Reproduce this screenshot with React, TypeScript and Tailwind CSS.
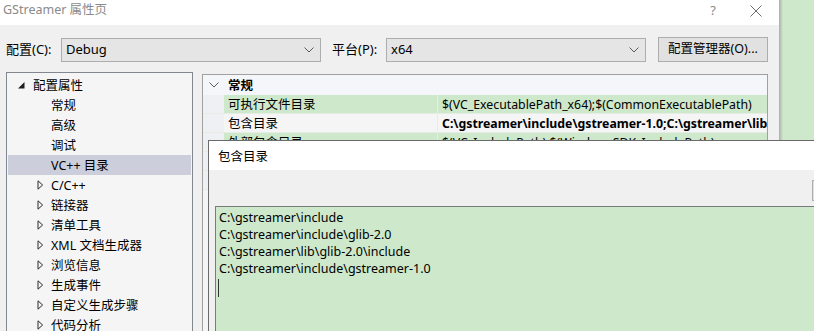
import React from "react";

const FONT = { fontFamily: '"Noto Sans", "Noto Sans CJK SC", sans-serif' };

function Chevron({ className = "" }: { className?: string }) {
  return (
    <svg width="10" height="6" viewBox="0 0 10 6" className={className}>
      <path d="M0.5 0.5 L5 5 L9.5 0.5" fill="none" stroke="#5a5a5a" strokeWidth="1" />
    </svg>
  );
}

function Combo({ text, width }: { text: string; width: string }) {
  return (
    <div className={`${width} h-[24px] border border-[#adadad] bg-[#e5e5e5] flex items-center pl-[4px] pr-[6px]`}>
      <span className="flex-1 text-[13px] text-black">{text}</span>
      <Chevron />
    </div>
  );
}

function Collapsed() {
  return (
    <svg width="7" height="10" viewBox="0 0 7 10" className="shrink-0">
      <path d="M1 0.8 L5.6 5 L1 9.2 Z" fill="none" stroke="#2b2b2b" strokeWidth="1" />
    </svg>
  );
}

function Expanded() {
  return (
    <svg width="7" height="7" viewBox="0 0 7 7" className="shrink-0">
      <path d="M6.5 0 L6.5 6.5 L0 6.5 Z" fill="#1e1e1e" />
    </svg>
  );
}

const treeItems: { label: string; kind: "leaf" | "collapsed"; selected?: boolean }[] = [
  { label: "常规", kind: "leaf" },
  { label: "高级", kind: "leaf" },
  { label: "调试", kind: "leaf" },
  { label: "VC++ 目录", kind: "leaf", selected: true },
  { label: "C/C++", kind: "collapsed" },
  { label: "链接器", kind: "collapsed" },
  { label: "清单工具", kind: "collapsed" },
  { label: "XML 文档生成器", kind: "collapsed" },
  { label: "浏览信息", kind: "collapsed" },
  { label: "生成事件", kind: "collapsed" },
  { label: "自定义生成步骤", kind: "collapsed" },
  { label: "代码分析", kind: "collapsed" },
];

const rows: { name: string; value: string; green: boolean; bold?: boolean }[] = [
  { name: "可执行文件目录", value: "$(VC_ExecutablePath_x64);$(CommonExecutablePath)", green: true },
  { name: "包含目录", value: "C:\\gstreamer\\include\\gstreamer-1.0;C:\\gstreamer\\lib\\glib-2.0\\include;C:\\gstreamer", green: false, bold: true },
  { name: "外部包含目录", value: "$(VC_IncludePath);$(WindowsSDK_IncludePath);", green: true },
  { name: "引用目录", value: "$(VC_ReferencesPath_x64);", green: false },
  { name: "库目录", value: "$(VC_LibraryPath_x64);$(WindowsSDK_LibraryPath_x64)", green: true },
];

const paths = [
  "C:\\gstreamer\\include",
  "C:\\gstreamer\\include\\glib-2.0",
  "C:\\gstreamer\\lib\\glib-2.0\\include",
  "C:\\gstreamer\\include\\gstreamer-1.0",
];

export default function App() {
  return (
    <div className="w-[814px] h-[331px] overflow-hidden relative flex bg-[#cee8cb]" style={FONT}>
      {/* Main property window */}
      <div className="w-[779px] h-full flex flex-col bg-[#f0f0f0] shrink-0">
        {/* Title bar */}
        <div className="h-[25px] bg-white flex items-center pl-[3px] shrink-0">
          <span className="text-[12.5px] text-[#8a8a8a] flex-1 -mt-[4px]">GStreamer 属性页</span>
          <span className="text-[13px] text-[#8a8a8a] w-[14px] text-center -mt-[4px]">?</span>
          <svg width="12" height="12" viewBox="0 0 12 12" className="ml-[30px] mr-[17px] -mt-[4px]">
            <path d="M0.5 0.5 L11.5 11.5 M11.5 0.5 L0.5 11.5" stroke="#6a6a6a" strokeWidth="1" />
          </svg>
        </div>

        {/* Config row */}
        <div className="flex items-center mt-[12px] h-[26px] shrink-0">
          <span className="text-[13px] text-black ml-[6px] w-[55px]">配置(C):</span>
          <Combo text="Debug" width="w-[260px]" />
          <span className="text-[13px] text-black ml-[11px] w-[54px]">平台(P):</span>
          <Combo text="x64" width="w-[260px]" />
          <div className="ml-[12px] w-[110px] h-[25px] border border-[#adadad] bg-[#e1e1e1] flex items-center justify-center text-[12.5px] text-black -mt-[2px]">
            配置管理器(O)...
          </div>
        </div>

        {/* Main panes */}
        <div className="flex flex-1 mt-[9px] min-h-0">
          {/* Tree */}
          <div className="ml-[6px] w-[187px] border-t border-l border-r border-[#828790] bg-[#f5f5f5] pt-[2px] pl-[1px] pr-[1px] overflow-hidden">
            <div className="h-[20px] flex items-center pl-[10px]">
              <Expanded />
              <span className="ml-[8px] text-[12.5px] text-black pt-[2px]">配置属性</span>
            </div>
            {treeItems.map((it) => (
              <div
                key={it.label}
                className={`h-[20px] flex items-center ${it.selected ? "bg-[#cccedb]" : ""}`}
              >
                <div className="w-[43px] flex justify-end pr-[7px]">
                  {it.kind === "collapsed" ? <Collapsed /> : null}
                </div>
                <span className="text-[12.5px] text-black whitespace-nowrap pt-[2px]">{it.label}</span>
              </div>
            ))}
          </div>

          {/* Property grid */}
          <div className="ml-[9px] mt-[2px] w-[566px] border-t border-l border-r border-[#a0a0a0] bg-[#f5f5f5] overflow-hidden">
            <div className="h-[20px] flex items-center bg-[#f5f6fa]">
              <div className="w-[21px] flex justify-center">
                <Chevron />
              </div>
              <span className="text-[12.5px] font-bold text-black ml-[4px] pt-[2px]">常规</span>
            </div>
            {rows.map((r) => (
              <div key={r.name} className="h-[19px] flex border-b border-[#e6ece6]">
                <div className="w-[21px] shrink-0 bg-[#eef0f4]" />
                <div
                  className={`w-[214px] shrink-0 flex items-center pl-[4px] border-r border-[#e8eaee] ${r.green ? "bg-[#cee8cb]" : "bg-[#f5f5f5]"}`}
                >
                  <span className="text-[12.5px] text-black whitespace-nowrap pt-[2px]">{r.name}</span>
                </div>
                <div
                  className={`flex-1 flex items-center pl-[4px] overflow-hidden ${r.green ? "bg-[#cee8cb]" : "bg-[#f5f5f5]"}`}
                >
                  <span className={`text-[12.3px] text-black whitespace-nowrap pt-[2px] ${r.bold ? "font-bold" : ""}`}>
                    {r.value}
                  </span>
                </div>
              </div>
            ))}
          </div>
        </div>
      </div>

      {/* Window shadow and background */}
      <div className="w-[4px] h-full shrink-0 bg-gradient-to-r from-[#a9b0a8] to-[#cee8cb]" />
      <div className="flex-1 h-full bg-[#cee8cb]" />

      {/* 包含目录 dialog */}
      <div className="absolute left-[208px] top-[140px] w-[606px] h-[191px] border-l border-t border-[#6b6b6b] bg-[#f0f0f0] flex flex-col overflow-hidden">
        <div className="h-[29px] bg-white flex items-center pl-[9px] shrink-0">
          <span className="text-[12.5px] text-black pt-[3px]">包含目录</span>
        </div>
        <div className="h-[36px] flex shrink-0">
          <div className="ml-[603px] mt-[10px] w-[30px] h-[21px] border border-[#adadad] bg-[#e1e1e1] shrink-0" />
        </div>
        <div className="ml-[6px] flex-1 border-t border-l border-[#7a7a7a] bg-[#cee8cb] pl-[3px] pt-[2px]">
          {paths.map((p) => (
            <div key={p} className="h-[17px] leading-[17px] text-[12.5px] text-black whitespace-nowrap">
              {p}
            </div>
          ))}
          <div className="w-px h-[18px] bg-[#333] mt-[2px] -ml-[1px]" />
        </div>
      </div>
    </div>
  );
}
